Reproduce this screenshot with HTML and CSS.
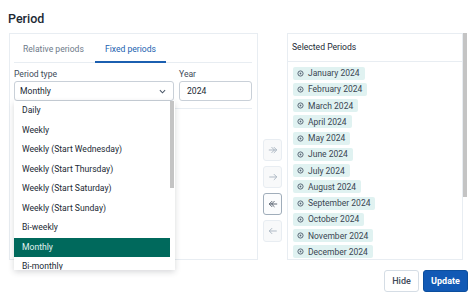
FILE: index.html
```html
<!DOCTYPE html>
<html>
<head>
<meta charset="utf-8">
<link rel="stylesheet" href="styles.css">
</head>
<body>
<div class="page">
  <h1 class="title">Period</h1>
  <div class="main">
    <div class="left">
      <div class="tabs">
        <div class="tab">Relative periods</div>
        <div class="tab active">Fixed periods</div>
      </div>
      <div class="filters">
        <div class="field type">
          <div class="label">Period type</div>
          <div class="select">
            <span>Monthly</span>
            <svg class="chev" width="7" height="5" viewBox="0 0 8 5"><path d="M1 1l3 3 3-3" fill="none" stroke="#4a5768" stroke-width="1.2"/></svg>
          </div>
          <div class="dropdown">
            <ul class="options">
              <li>Daily</li>
              <li>Weekly</li>
              <li>Weekly (Start Wednesday)</li>
              <li>Weekly (Start Thursday)</li>
              <li>Weekly (Start Saturday)</li>
              <li>Weekly (Start Sunday)</li>
              <li>Bi-weekly</li>
              <li class="sel">Monthly</li>
              <li>Bi-monthly</li>
            </ul>
            <div class="track small"><div class="thumb"></div></div>
          </div>
        </div>
        <div class="field year">
          <div class="label">Year</div>
          <div class="input">2024</div>
        </div>
      </div>
    </div>
    <div class="transfer">
      <button class="tbtn"><svg width="10" height="10" viewBox="0 0 12 12"><path d="M1 6H10.5M7 2.5L10.5 6L7 9.5M4.2 2.5L7.7 6L4.2 9.5" fill="none" stroke="currentColor" stroke-width="1"/></svg></button>
      <button class="tbtn"><svg width="10" height="10" viewBox="0 0 12 12"><path d="M1.5 6H10.5M7 2.5L10.5 6L7 9.5" fill="none" stroke="currentColor" stroke-width="1"/></svg></button>
      <button class="tbtn on"><svg width="10" height="10" viewBox="0 0 12 12"><path d="M11 6H1.5M5 2.5L1.5 6L5 9.5M7.8 2.5L4.3 6L7.8 9.5" fill="none" stroke="currentColor" stroke-width="1"/></svg></button>
      <button class="tbtn"><svg width="10" height="10" viewBox="0 0 12 12"><path d="M10.5 6H1.5M5 2.5L1.5 6L5 9.5" fill="none" stroke="currentColor" stroke-width="1"/></svg></button>
    </div>
    <div class="right">
      <div class="selbox">
        <div class="selhead">Selected Periods</div>
        <div class="chips">
          <div class="chip"><svg width="7" height="7" viewBox="0 0 7 7"><circle cx="3.5" cy="3.5" r="2.6" fill="none" stroke="#5a6878" stroke-width="1"/><circle cx="3.5" cy="3.5" r="0.9" fill="#5a6878"/></svg>January 2024</div>
          <div class="chip"><svg width="7" height="7" viewBox="0 0 7 7"><circle cx="3.5" cy="3.5" r="2.6" fill="none" stroke="#5a6878" stroke-width="1"/><circle cx="3.5" cy="3.5" r="0.9" fill="#5a6878"/></svg>February 2024</div>
          <div class="chip"><svg width="7" height="7" viewBox="0 0 7 7"><circle cx="3.5" cy="3.5" r="2.6" fill="none" stroke="#5a6878" stroke-width="1"/><circle cx="3.5" cy="3.5" r="0.9" fill="#5a6878"/></svg>March 2024</div>
          <div class="chip"><svg width="7" height="7" viewBox="0 0 7 7"><circle cx="3.5" cy="3.5" r="2.6" fill="none" stroke="#5a6878" stroke-width="1"/><circle cx="3.5" cy="3.5" r="0.9" fill="#5a6878"/></svg>April 2024</div>
          <div class="chip"><svg width="7" height="7" viewBox="0 0 7 7"><circle cx="3.5" cy="3.5" r="2.6" fill="none" stroke="#5a6878" stroke-width="1"/><circle cx="3.5" cy="3.5" r="0.9" fill="#5a6878"/></svg>May 2024</div>
          <div class="chip"><svg width="7" height="7" viewBox="0 0 7 7"><circle cx="3.5" cy="3.5" r="2.6" fill="none" stroke="#5a6878" stroke-width="1"/><circle cx="3.5" cy="3.5" r="0.9" fill="#5a6878"/></svg>June 2024</div>
          <div class="chip"><svg width="7" height="7" viewBox="0 0 7 7"><circle cx="3.5" cy="3.5" r="2.6" fill="none" stroke="#5a6878" stroke-width="1"/><circle cx="3.5" cy="3.5" r="0.9" fill="#5a6878"/></svg>July 2024</div>
          <div class="chip"><svg width="7" height="7" viewBox="0 0 7 7"><circle cx="3.5" cy="3.5" r="2.6" fill="none" stroke="#5a6878" stroke-width="1"/><circle cx="3.5" cy="3.5" r="0.9" fill="#5a6878"/></svg>August 2024</div>
          <div class="chip"><svg width="7" height="7" viewBox="0 0 7 7"><circle cx="3.5" cy="3.5" r="2.6" fill="none" stroke="#5a6878" stroke-width="1"/><circle cx="3.5" cy="3.5" r="0.9" fill="#5a6878"/></svg>September 2024</div>
          <div class="chip"><svg width="7" height="7" viewBox="0 0 7 7"><circle cx="3.5" cy="3.5" r="2.6" fill="none" stroke="#5a6878" stroke-width="1"/><circle cx="3.5" cy="3.5" r="0.9" fill="#5a6878"/></svg>October 2024</div>
          <div class="chip"><svg width="7" height="7" viewBox="0 0 7 7"><circle cx="3.5" cy="3.5" r="2.6" fill="none" stroke="#5a6878" stroke-width="1"/><circle cx="3.5" cy="3.5" r="0.9" fill="#5a6878"/></svg>November 2024</div>
          <div class="chip"><svg width="7" height="7" viewBox="0 0 7 7"><circle cx="3.5" cy="3.5" r="2.6" fill="none" stroke="#5a6878" stroke-width="1"/><circle cx="3.5" cy="3.5" r="0.9" fill="#5a6878"/></svg>December 2024</div>
        </div>
      </div>
      <div class="track big"><div class="thumb"></div></div>
    </div>
  </div>
  <div class="footer">
    <button class="btn hide">Hide</button>
    <button class="btn update">Update</button>
  </div>
</div>
</body>
</html>
```
FILE: styles.css
```css
* { box-sizing: border-box; }
html, body { margin: 0; padding: 0; }
body {
  width: 474px;
  height: 298px;
  overflow: hidden;
  background: #ffffff;
  font-family: Roboto, "Liberation Sans", sans-serif;
  color: #212934;
}
.page { padding: 0 6px 0 9px; }
.title {
  margin: 0 0 4px -1px;
  padding-top: 9px;
  font-size: 12.5px;
  line-height: 20px;
  font-weight: 500;
  color: #212934;
}
.main { display: flex; height: 227px; }
.left {
  width: 249px;
  border: 1px solid #e8edf2;
  padding: 0 5px 0 4px;
}
.tabs {
  display: flex;
  height: 29px;
  border-bottom: 1px solid #e8edf2;
}
.tab {
  padding: 2px 11px 0 9px;
  height: 28px;
  line-height: 26px;
  font-size: 8.6px;
  color: #6e7a8a;
  white-space: nowrap;
}
.tab + .tab { padding: 2px 10px 0; }
.tab.active {
  color: #1b5fb0;
  box-shadow: inset 0 -1px 0 #1b5fb0, 0 1px 0 #1b5fb0;
}
.filters {
  display: flex;
  gap: 5px;
  padding: 5px 0 7px;
  border-bottom: 1px solid #e8edf2;
}
.field { position: relative; }
.field.type { width: 160px; }
.field.year { flex: 1; }
.label {
  font-size: 8.6px;
  line-height: 13px;
  color: #404b5a;
}
.select, .input {
  height: 20px;
  border: 1px solid #c9d0d8;
  border-radius: 3px;
  font-size: 8.6px;
  line-height: 18px;
  color: #212934;
}
.select {
  display: flex;
  align-items: center;
  justify-content: space-between;
  padding: 0 7px 0 5px;
}
.chev { margin-top: 1px; }
.input { padding-left: 7px; }
.dropdown {
  position: absolute;
  left: 0;
  top: 33px;
  width: 161px;
  height: 169px;
  background: #ffffff;
  box-shadow: 0 2px 6px rgba(33, 41, 52, 0.18);
  display: flex;
  overflow: hidden;
  z-index: 2;
}
.options {
  list-style: none;
  margin: 0;
  padding: 0;
  flex: 1;
}
.options li {
  height: 19.5px;
  line-height: 19.5px;
  padding-left: 8px;
  font-size: 8.6px;
  color: #212934;
  white-space: nowrap;
}
.options li.sel {
  background: #00695c;
  color: #e0f2f1;
}
.track { width: 5px; display: flex; flex-direction: column; }
.track .thumb { background: #c4c4c4; }
.track.small .thumb { height: 87px; width: 4px; }
.track.big .thumb { height: 164px; width: 4px; }
.transfer {
  width: 29px;
  display: flex;
  flex-direction: column;
  align-items: center;
  padding-top: 106px;
  gap: 5px;
}
.tbtn {
  width: 19px;
  height: 22px;
  padding: 0;
  border: 1px solid #e8edf2;
  border-radius: 3px;
  background: #f8f9fa;
  color: #a0adba;
  display: flex;
  align-items: center;
  justify-content: center;
}
.tbtn.on {
  border-color: #a0adba;
  background: #fbfcfd;
  color: #404b5a;
}
.right { display: flex; }
.selbox {
  width: 176px;
  height: 227px;
  border: 1px solid #e8edf2;
  overflow: hidden;
}
.selhead {
  height: 28px;
  line-height: 27px;
  padding-left: 4px;
  font-size: 8.6px;
  color: #212934;
  border-bottom: 1px solid #e8edf2;
}
.chips {
  display: flex;
  flex-direction: column;
  align-items: flex-start;
  gap: 3.25px;
  padding: 4.5px 0 0 5px;
}
.chip {
  display: flex;
  align-items: center;
  gap: 4px;
  height: 13px;
  padding: 0 5px 0 4px;
  background: #e0f2f1;
  border-radius: 2px;
  font-size: 8.5px;
  color: #3a4552;
  white-space: nowrap;
}
.footer {
  display: flex;
  justify-content: flex-end;
  gap: 4px;
  margin-top: 10px;
}
.btn {
  height: 22px;
  padding: 0;
  border-radius: 3px;
  font-family: Roboto, "Liberation Sans", sans-serif;
  font-size: 9px;
}
.btn.hide {
  width: 35px;
  border: 1px solid #d5dde5;
  background: #ffffff;
  color: #404b5a;
  font-weight: 500;
}
.btn.update {
  width: 45px;
  border: 1px solid #0b4e9e;
  background: #1159b5;
  color: #ffffff;
  font-weight: 700;
}
```
